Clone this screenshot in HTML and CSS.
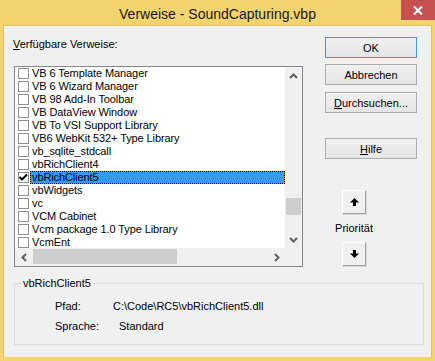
FILE: index.html
```html
<!DOCTYPE html>
<html lang="de">
    <head>
        <meta charset="UTF-8" />
        <title>Verweise - SoundCapturing.vbp</title>
        <link rel="stylesheet" href="styles.css">
    </head>
    <body>
        <div class="window">
            <div class="titlebar">
                <span class="title">Verweise - SoundCapturing.vbp</span>
                <div class="close">
                    <svg width="10" height="9" viewBox="0 0 10 9"><path d="M1 0.5 L9 8.5 M9 0.5 L1 8.5" stroke="#fff" stroke-width="2" /></svg>
                </div>
            </div>
            <div class="client">
                <div class="top">
                    <div class="refs">
                        <div class="label"><u>V</u>erfügbare Verweise:</div>
                        <div class="listbox">
                            <ul class="items">
                                <li><span class="box"></span><span class="text">VB 6 Template Manager</span></li>
                                <li><span class="box"></span><span class="text">VB 6 Wizard Manager</span></li>
                                <li><span class="box"></span><span class="text">VB 98 Add-In Toolbar</span></li>
                                <li><span class="box"></span><span class="text">VB DataView Window</span></li>
                                <li><span class="box"></span><span class="text">VB To VSI Support Library</span></li>
                                <li><span class="box"></span><span class="text">VB6 WebKit 532+ Type Library</span></li>
                                <li><span class="box"></span><span class="text">vb_sqlite_stdcall</span></li>
                                <li><span class="box"></span><span class="text">vbRichClient4</span></li>
                                <li class="selected">
                                    <span class="box checked"><svg width="11" height="11" viewBox="0 0 11 11"><path d="M1.5 5 L4 7.5 L9 2.5" fill="none" stroke="#000" stroke-width="2" /></svg></span>
                                    <span class="text">vbRichClient5</span>
                                </li>
                                <li><span class="box"></span><span class="text">vbWidgets</span></li>
                                <li><span class="box"></span><span class="text">vc</span></li>
                                <li><span class="box"></span><span class="text">VCM Cabinet</span></li>
                                <li><span class="box"></span><span class="text">Vcm package 1.0 Type Library</span></li>
                                <li><span class="box"></span><span class="text">VcmEnt</span></li>
                            </ul>
                            <div class="vscroll">
                                <div class="sbtn">
                                    <svg width="9" height="6" viewBox="0 0 9 6"><path d="M1 5 L4.5 1.5 L8 5" fill="none" stroke="#606060" stroke-width="2" /></svg>
                                </div>
                                <div class="vtrack"><div class="vthumb"></div></div>
                                <div class="sbtn">
                                    <svg width="9" height="6" viewBox="0 0 9 6"><path d="M1 1 L4.5 4.5 L8 1" fill="none" stroke="#606060" stroke-width="2" /></svg>
                                </div>
                            </div>
                            <div class="hscroll">
                                <div class="sbtn">
                                    <svg width="6" height="9" viewBox="0 0 6 9"><path d="M5 1 L1.5 4.5 L5 8" fill="none" stroke="#606060" stroke-width="2" /></svg>
                                </div>
                                <div class="htrack"><div class="hthumb"></div></div>
                                <div class="sbtn">
                                    <svg width="6" height="9" viewBox="0 0 6 9"><path d="M1 1 L4.5 4.5 L1 8" fill="none" stroke="#606060" stroke-width="2" /></svg>
                                </div>
                            </div>
                            <div class="corner"></div>
                        </div>
                    </div>
                    <div class="actions">
                        <button class="btn default">OK</button>
                        <button class="btn">Abbrechen</button>
                        <button class="btn"><u>D</u>urchsuchen...</button>
                        <button class="btn help"><u>H</u>ilfe</button>
                        <div class="prio">
                            <button class="arrow">
                                <svg width="9" height="8" viewBox="0 0 9 8"><path d="M4.5 0 L9 4.5 L6 4.5 L6 8 L3 8 L3 4.5 L0 4.5 Z" fill="#000" /></svg>
                            </button>
                            <span class="prio-label">Priorität</span>
                            <button class="arrow">
                                <svg width="9" height="8" viewBox="0 0 9 8"><path d="M4.5 8 L9 3.5 L6 3.5 L6 0 L3 0 L3 3.5 L0 3.5 Z" fill="#000" /></svg>
                            </button>
                        </div>
                    </div>
                </div>
                <fieldset class="group">
                    <legend>vbRichClient5</legend>
                    <div class="info-row"><span class="key">Pfad:</span><span>C:\Code\RC5\vbRichClient5.dll</span></div>
                    <div class="info-row"><span class="key">Sprache:</span><span class="lang">Standard</span></div>
                </fieldset>
            </div>
        </div>
    </body>
</html>
```

FILE: styles.css
```css
body {
    margin: 0;
    font-family: "Liberation Sans", Arial, sans-serif;
    font-size: 11px;
    color: #000;
}
.window {
    width: 435px;
    height: 361px;
    box-sizing: border-box;
    background: #f3d36e;
    padding: 0 3px 4px 3px;
    display: flex;
    flex-direction: column;
}
.titlebar {
    position: relative;
    height: 25px;
    display: flex;
    align-items: center;
    justify-content: center;
}
.title {
    font-size: 14px;
    color: #1a1a1a;
    margin-top: 2px;
}
.close {
    position: absolute;
    top: 0;
    right: -3px;
    width: 34px;
    height: 20px;
    background: #c75050;
    display: flex;
    align-items: center;
    justify-content: center;
}
.client {
    flex: 1;
    background: #f0f0f0;
    border: 1px solid #dcc06a;
    border-bottom: none;
    padding: 11px 15px 0 10px;
}
.top {
    display: flex;
}
.refs {
    width: 289px;
}
.label {
    line-height: 14px;
    margin-left: -1px;
    margin-bottom: 15px;
}
.listbox {
    width: 289px;
    height: 201px;
    box-sizing: border-box;
    border: 1px solid #828790;
    background: #fff;
    display: grid;
    grid-template-columns: 270px 17px;
    grid-template-rows: 181px 18px;
}
.items {
    list-style: none;
    margin: 0;
    padding: 0;
    overflow: hidden;
    letter-spacing: -0.1px;
}
.items li {
    height: 13px;
    display: flex;
    align-items: center;
}
.box {
    width: 11px;
    height: 11px;
    box-sizing: border-box;
    border: 1px solid #8e8f8f;
    background: #fff;
    margin: 0 1px 0 3px;
    flex: none;
    position: relative;
}
.box svg {
    position: absolute;
    left: -1px;
    top: -1px;
}
.text {
    flex: 1;
    height: 13px;
    line-height: 13px;
    padding-left: 2px;
    white-space: nowrap;
}
.selected .text {
    background: #3399ff;
    box-shadow: inset 0 0 0 1px #d88a1c;
    outline: 1px dotted #000;
    outline-offset: -1px;
}
.vscroll,
.hscroll {
    background: #f0f0f0;
    display: flex;
}
.vscroll {
    flex-direction: column;
}
.sbtn {
    width: 17px;
    height: 17px;
    flex: none;
    display: flex;
    align-items: center;
    justify-content: center;
}
.hscroll .sbtn {
    height: 18px;
}
.vtrack {
    flex: 1;
}
.vthumb {
    margin: 114px 1px 0 1px;
    height: 17px;
    background: #cdcdcd;
}
.htrack {
    flex: 1;
}
.hthumb {
    margin: 1px 0 0 1px;
    width: 144px;
    height: 15px;
    background: #cdcdcd;
}
.corner {
    background: #f0f0f0;
}
.actions {
    margin-left: 22px;
    width: 92px;
    display: flex;
    flex-direction: column;
}
.btn {
    width: 92px;
    height: 21px;
    font: inherit;
    color: #000;
    border: 1px solid #acacac;
    background: linear-gradient(#f0f0f0, #e5e5e5);
    padding: 0;
    margin-bottom: 6px;
}
.btn.default {
    border-color: #3399ff;
}
.btn:nth-child(2) {
    margin-bottom: 7px;
}
.btn:nth-child(3) {
    margin-bottom: 25px;
}
.btn.help {
    margin-bottom: 31px;
}
.prio {
    width: 24px;
    margin-left: 17px;
    display: flex;
    flex-direction: column;
    align-items: center;
}
.arrow {
    width: 24px;
    height: 24px;
    padding: 0;
    border: 1px solid;
    border-color: #fff #a0a0a0 #a0a0a0 #fff;
    box-shadow: 1px 1px 0 #d8d8d8;
    background: #f0f0f0;
    display: flex;
    align-items: center;
    justify-content: center;
}
.prio-label {
    white-space: nowrap;
    line-height: 14px;
    margin: 7px 0 7px 0;
}
.group {
    margin: 10px 0 0 0;
    width: 410px;
    box-sizing: border-box;
    border: 1px solid #dcdcdc;
    padding: 9px 0 11px 40px;
}
.group legend {
    margin-left: -34px;
    padding: 0 2px;
    line-height: 13px;
}
.info-row {
    display: flex;
    line-height: 14px;
}
.info-row + .info-row {
    margin-top: 6px;
}
.key {
    width: 58px;
}
.lang {
    padding-left: 6px;
}
```
